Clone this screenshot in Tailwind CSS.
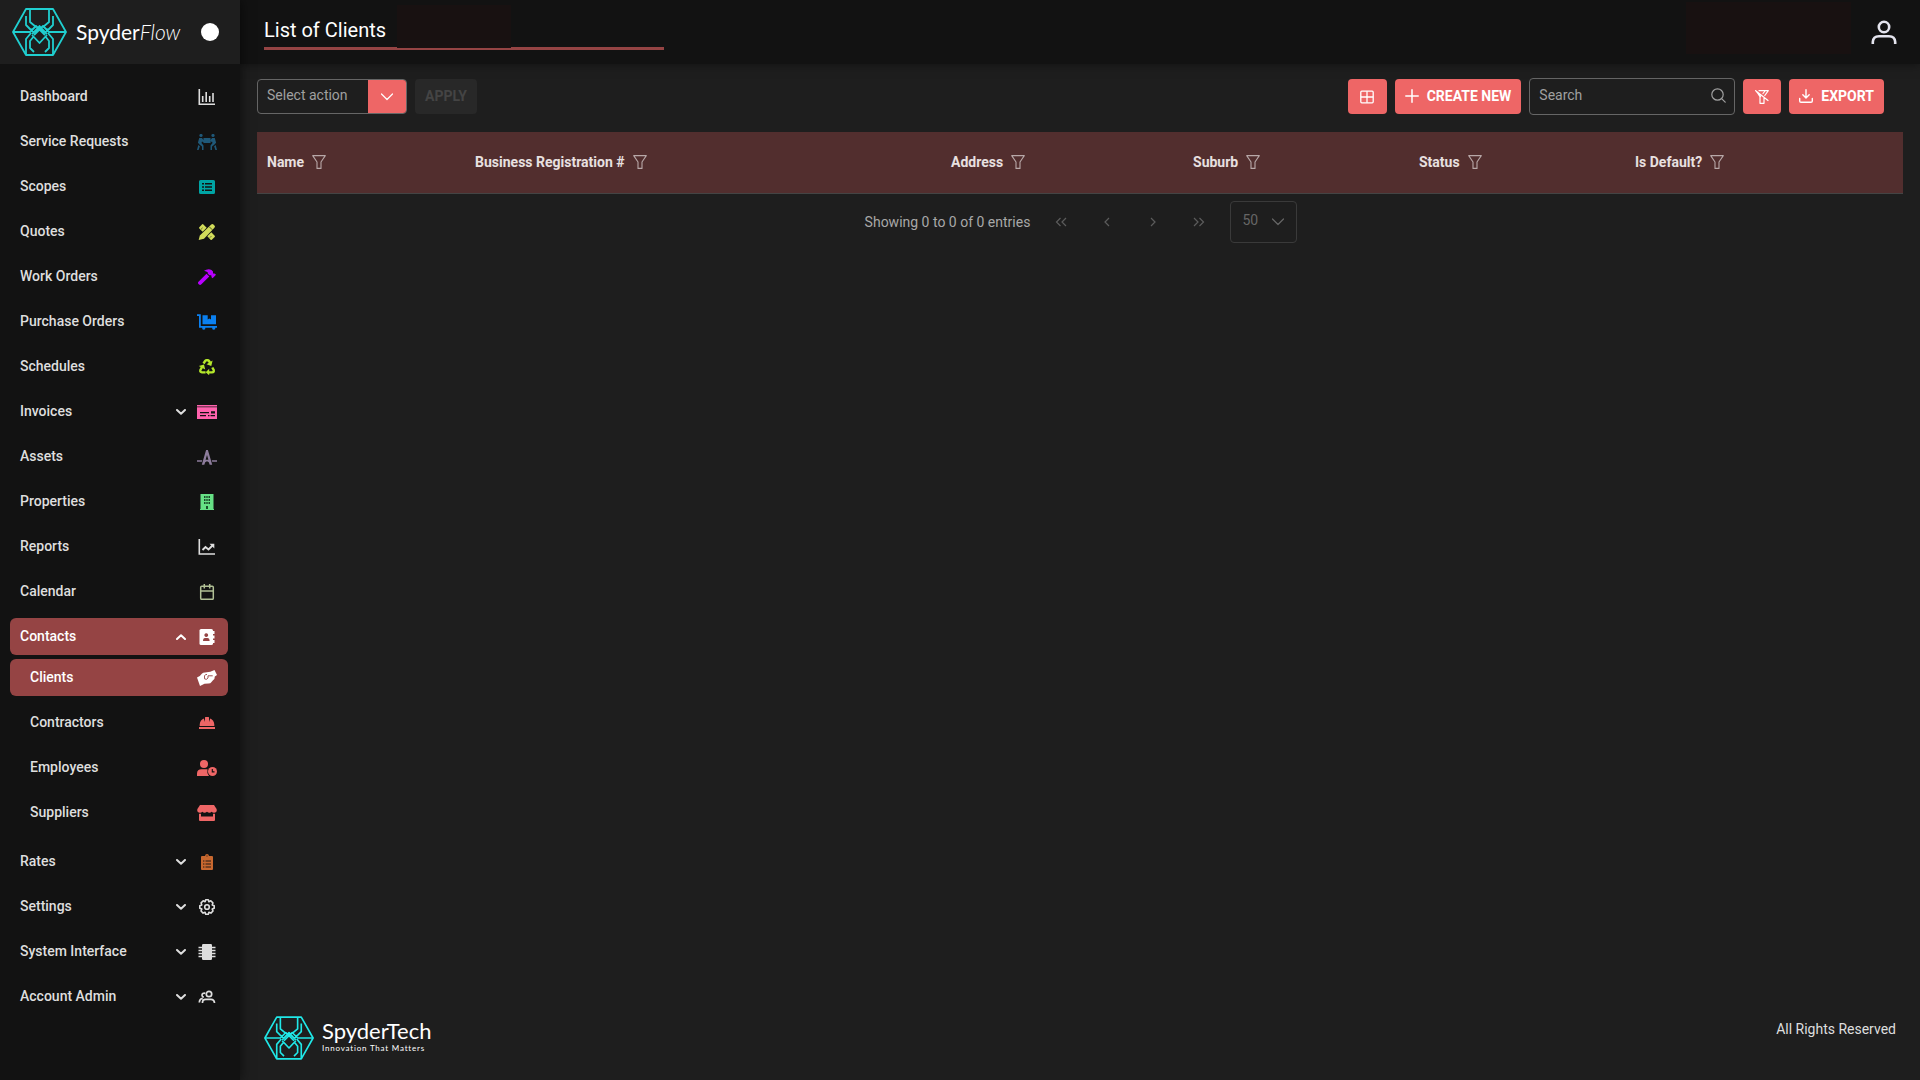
<!DOCTYPE html>
<html lang="en">
<head>
    <meta charset="UTF-8">
    <meta name="viewport" content="width=device-width, initial-scale=1.0">
    <title>SpyderFlow - List of Clients</title>
    <script src="https://cdn.jsdelivr.net/npm/@tailwindcss/browser@4"></script>
</head>
<body class="bg-[#1e1e1e] font-['Roboto',sans-serif] text-sm text-[#dedede]">
    <!-- Shared icons -->
    <svg class="hidden">
        <symbol id="spider" viewBox="0 0 55 48">
            <g fill="none" stroke="currentColor" stroke-width="1.800" stroke-linejoin="round">
                <path d="M1 24 14 1H41L54 24 41 47H14Z"/>
                <path d="M18 1V14L24 19M37 1V14L31 19M14 8V17L21 24M41 8V17L34 24"/>
                <path d="M1 24H18L24 18 33 27M54 24H37L31 18 22 27M19 21 22 24 27.500 18 33 24 36 21M20 26 27.500 19 35 26"/>
                <path d="M19 25 14 31V47M36 25 41 31V47M22 28 18 33V40L22 44M33 28 37 33V40L33 44M20 27 27.500 35 35 27"/>
            </g>
        </symbol>
        <symbol id="chev" viewBox="0 0 10 6">
            <path d="M1 1 5 4.700 9 1" fill="none" stroke="currentColor" stroke-width="2" stroke-linecap="round" stroke-linejoin="round"/>
        </symbol>
        <symbol id="thin-chev" viewBox="0 0 14 8">
            <path d="M1.500 1 7 6.500 12.500 1" fill="none" stroke="currentColor" stroke-width="1.200" stroke-linecap="round" stroke-linejoin="round"/>
        </symbol>
        <symbol id="funnel" viewBox="0 0 14 14">
            <path d="M.7.600H13.300L9 7V13.400H5V7Z" fill="none" stroke="currentColor" stroke-width="1.100" stroke-linejoin="round"/>
        </symbol>
    </svg>

    <div class="flex min-h-screen">
        <!-- Sidebar -->
        <aside class="relative z-20 w-60 shrink-0 bg-[#121212] shadow-[0_0_12px_rgba(0,0,0,0.6)]">
            <div class="flex h-16 items-center bg-[#1e1e1e] pl-3 pr-[21px]">
                <svg class="h-12 w-[55px] text-[#20cfd0]"><use href="#spider"/></svg>
                <span class="ml-[9px] font-['Lato',sans-serif] text-[21px] text-white">Spyder<i class="font-light">Flow</i></span>
                <button type="button" aria-label="Pin menu" class="ml-auto size-[18px] rounded-full bg-white"></button>
            </div>
            <nav class="flex flex-col gap-2 pt-[14px] pl-[10px] pr-3 font-medium">
                <a href="#" class="flex h-[37px] items-center justify-between pl-[10px] pr-[11px]"><span class="pb-[2px]">Dashboard</span>
                    <svg class="h-4 w-5" viewBox="0 0 20 16" fill="none" stroke="currentColor" stroke-width="1.600"><path d="M2.300 0V15.200H18M5.700 13V7M9.200 13V3M12.700 13V7M16 13V4"/></svg>
                </a>
                <a href="#" class="flex h-[37px] items-center justify-between pl-[10px] pr-[11px]"><span class="pb-[2px]">Service Requests</span>
                    <svg class="h-4 w-5 text-[#1f5878]" viewBox="0 0 20 16" fill="currentColor"><circle cx="4" cy="1.500" r="1.600"/><circle cx="16" cy="1.500" r="1.600"/><path d="M6.500 4H13.500V9H6.500ZM2.200 4H5L6.800 6.500V8.500L5 7.500 4.500 9 6.500 11.500V16H5V12.500L2.500 10.500.9 8.800ZM17.800 4H15L13.200 6.500V8.500L15 7.500 15.500 9 13.500 11.500V16H15V12.500L17.500 10.500 19.100 8.800ZM1.300 11 2.900 12.300 1.600 16H0ZM18.700 11 17.100 12.300 18.400 16H20Z"/></svg>
                </a>
                <a href="#" class="flex h-[37px] items-center justify-between pl-[10px] pr-[11px]"><span class="pb-[2px]">Scopes</span>
                    <svg class="h-4 w-5 text-[#00a4a4]" viewBox="0 0 20 16" fill="currentColor" fill-rule="evenodd"><path d="M3.500 1H16.500A1.500 1.500 0 0 1 18 2.500V13.500A1.500 1.500 0 0 1 16.500 15H3.500A1.500 1.500 0 0 1 2 13.500V2.500A1.500 1.500 0 0 1 3.500 1ZM5 4V5.500H7V4ZM8 4V5.500H15V4ZM5 7.200V8.700H7V7.200ZM8 7.200V8.700H15V7.200ZM5 10.500V12H7V10.500ZM8 10.500V12H15V10.500Z"/></svg>
                </a>
                <a href="#" class="flex h-[37px] items-center justify-between pl-[10px] pr-[11px]"><span class="pb-[2px]">Quotes</span>
                    <svg class="h-4 w-5 text-[#d2dc5a]" viewBox="0 0 20 16" fill="currentColor"><path d="M2.300 3.200 5.200.3Q5.800-.2 6.400.4L9.700 3.700 5.700 7.700 2.300 4.400Q1.800 3.800 2.300 3.200ZM14.300 8.300 17.700 11.700Q18.200 12.300 17.700 12.900L14.800 15.700Q14.200 16.200 13.600 15.700L10.300 12.300Z"/><path d="M14.200.600Q15.500-.4 16.700.7L17.400 1.400Q18.500 2.500 17.400 3.800L7 14.800 1.700 16 2.800 11.500Z"/><path d="M4.200 5.200 5.500 3.900M13 13.500 14.200 12.300M12.300 2.800 15.300 5.800" stroke="#121212" stroke-width=".7"/></svg>
                </a>
                <a href="#" class="flex h-[37px] items-center justify-between pl-[10px] pr-[11px]"><span class="pb-[2px]">Work Orders</span>
                    <svg class="h-4 w-5 text-[#b800ff]" viewBox="0 0 20 16" fill="currentColor"><path d="M7 1.800Q11-1 14.500.9L16 2.400V4.100L16.700 4.800 17.700 4.500 19 5.800 15.600 9.300 14.300 8 14.600 7 14 6.300H12.400L10.700 4.600V3.300Q9.400 2.400 7 1.800Z"/><path d="M9.500 4.800 12.300 7.600 4.400 15.200Q3.200 16.500 2 15.500L1.500 15Q.5 13.900 1.500 12.800Z"/></svg>
                </a>
                <a href="#" class="flex h-[37px] items-center justify-between pl-[10px] pr-[11px]"><span class="pb-[2px]">Purchase Orders</span>
                    <svg class="h-4 w-5 text-[#0b80f0]" viewBox="0 0 20 16" fill="currentColor"><path d="M0 .3H3.800V12H20V13.800H18.300A1.600 1.600 0 1 1 15.200 13.800H8.300A1.600 1.600 0 1 1 5.200 13.800H2V2H0ZM5.500 1.300H10.700V5.500L12.300 4.500 14 5.500V1.300H19V10.300H5.500Z"/></svg>
                </a>
                <a href="#" class="flex h-[37px] items-center justify-between pl-[10px] pr-[11px]"><span class="pb-[2px]">Schedules</span>
                    <svg class="h-4 w-5 text-[#b5e82b]" viewBox="0 0 20 16"><g fill="none" stroke="currentColor" stroke-width="2.400"><path d="M6.500 4.500 8.300 1.800Q8.800 1.200 9.500 1.200H10.700Q11.500 1.200 12 2L13.300 4"/><path d="M15.300 8.500 16.700 11Q17.300 13.400 15 13.400H11.500"/><path d="M8.600 13.400H5Q2.700 13.200 3.400 11L5 8.200"/></g><path d="M15.600 1.500 14.300 7 9.500 5.300ZM12.200 9.700V16.300L8.700 13.200ZM1.800 7.100 7 5.600 8.200 10.500Z" fill="currentColor"/></svg>
                </a>
                <a href="#" class="flex h-[37px] items-center pl-[10px] pr-[11px]"><span class="pb-[2px]">Invoices</span>
                    <svg class="ml-auto mr-[11px] h-[6px] w-[10px]"><use href="#chev"/></svg>
                    <svg class="h-4 w-5 text-[#ff62ad]" viewBox="0 0 20 16" fill="currentColor" fill-rule="evenodd"><path d="M0 1H20V2.500H0ZM0 3.200H20V15H0ZM3 8V9.200H12V8ZM3 11V12.200H9V11ZM11 11V12.200H12.500V11ZM13.500 11V12.200H18V11ZM14 7.300V9.500H18V7.300Z"/></svg>
                </a>
                <a href="#" class="flex h-[37px] items-center justify-between pl-[10px] pr-[11px]"><span class="pb-[2px]">Assets</span>
                    <svg class="h-4 w-5 text-[#8d7c9c]" viewBox="0 0 20 16" fill="currentColor"><path d="M9.100 1H10.900L15.200 15.800H12.700L11.800 13.200 10 12.200 8.200 13.200 7.300 15.800H4.800ZM10 6 8.600 10.800H11.400Z" fill-rule="evenodd"/><path d="M0 11.300H5.300L4.800 12.700H0ZM14.700 11.300H20V12.700H15.200Z"/></svg>
                </a>
                <a href="#" class="flex h-[37px] items-center justify-between pl-[10px] pr-[11px]"><span class="pb-[2px]">Properties</span>
                    <svg class="h-4 w-5 text-[#66e085]" viewBox="0 0 20 16"><path d="M3.500 0H16.500V15H17V16H3V15H3.500Z" fill="currentColor"/><path d="M7 2H8.500V4H7ZM9.300 2H10.700V4H9.300ZM11.500 2H13V4H11.500ZM7 5H8.500V7H7ZM9.300 5H10.700V7H9.300ZM11.500 5H13V7H11.500ZM7 8H8.500V10H7ZM9.300 8H10.700V10H9.300ZM11.500 8H13V10H11.500ZM9 12H11V15H9Z" fill="#1a4a28"/></svg>
                </a>
                <a href="#" class="flex h-[37px] items-center justify-between pl-[10px] pr-[11px]"><span class="pb-[2px]">Reports</span>
                    <svg class="h-4 w-5" viewBox="0 0 20 16" fill="none" stroke="currentColor" stroke-width="1.600"><path d="M2.300 0V15H18"/><path d="M5.500 11 8.500 8 11.500 10.500 16 6" stroke-width="1.900"/><path d="M12.500 4.800H17.300V9.500Z" fill="currentColor" stroke="none"/></svg>
                </a>
                <a href="#" class="flex h-[37px] items-center justify-between pl-[10px] pr-[11px]"><span class="pb-[2px]">Calendar</span>
                    <svg class="h-4 w-5 text-[#b1c095]" viewBox="0 0 20 16" fill="none" stroke="currentColor" stroke-width="1.500"><rect x="3.700" y="2.200" width="12.600" height="13.100" rx="1"/><path d="M3.700 7H16.300M7.300 0V4.500M12.700 0V4.500"/></svg>
                </a>

                <!-- Contacts group -->
                <div class="flex flex-col gap-1">
                    <a href="#" class="flex h-[37px] items-center rounded-md bg-[#954444] pl-[10px] pr-[11px] text-white"><span class="pb-[2px]">Contacts</span>
                        <svg class="ml-auto mr-[11px] h-[6px] w-[10px] rotate-180"><use href="#chev"/></svg>
                        <svg class="h-4 w-5" viewBox="0 0 20 16" fill="currentColor"><rect x="2.500" width="13.500" height="16" rx="1.600"/><path d="M16 2H17.500V5H16ZM16 6.500H17.500V9.500H16ZM16 11H17.500V14H16Z"/><path d="M9.300 4.200A1.900 1.900 0 1 1 9.200 4.200ZM6 11.900Q6 9 8 9H10.500Q12.600 9 12.600 11.900Z" fill="#954444"/></svg>
                    </a>
                    <div class="flex flex-col gap-2">
                        <a href="#" class="flex h-[37px] items-center justify-between rounded-md bg-[#954444] pl-5 pr-[11px] text-white"><span class="pb-[2px]">Clients</span>
                            <svg class="h-4 w-5" viewBox="0 0 20 16" fill="currentColor"><path d="M0 7.500 2.800 6 4.800 3.800Q6 2.400 8 2.400L13.300 1.800 17.500 0 20 5 17.800 6.500Q18 9 16 10.300L14.500 12Q13.500 13.500 11.500 13.600L7.500 13.800 3 16Z"/><path d="M15.700 5.800H11V8Q9.500 10.300 7.500 8.800V5.800Q8 4.400 10 4.400" fill="none" stroke="#954444" stroke-width=".9"/></svg>
                        </a>
                        <a href="#" class="flex h-[37px] items-center justify-between pl-5 pr-[11px]"><span class="pb-[2px]">Contractors</span>
                            <svg class="h-4 w-5 text-[#ee6666]" viewBox="0 0 20 16" fill="currentColor"><path d="M2 12H18V14H2ZM2.700 11V9.500Q3 5.200 6.800 3.500L8 7V2.500Q8 2 8.500 2H11.500Q12 2 12 2.500V7L13.200 3.500Q17 5.200 17.300 9.500V11Z"/></svg>
                        </a>
                        <a href="#" class="flex h-[37px] items-center justify-between pl-5 pr-[11px]"><span class="pb-[2px]">Employees</span>
                            <svg class="h-4 w-5 text-[#ee6666]" viewBox="0 0 20 16" fill="currentColor"><circle cx="7" cy="4" r="4"/><path d="M0 16V13.500Q.2 9.300 4.500 9.300H10.500Q9.500 12.700 12 16Z"/><circle cx="15.500" cy="11.500" r="4.500"/><path d="M15.300 9V11.900H17.500" fill="none" stroke="#121212" stroke-width="1.100"/></svg>
                        </a>
                        <a href="#" class="flex h-[37px] items-center justify-between pl-5 pr-[11px]"><span class="pb-[2px]">Suppliers</span>
                            <svg class="h-4 w-5 text-[#ee6666]" viewBox="0 0 20 16" fill="currentColor"><path d="M3 0H17L19.600 4Q20.500 7.500 17 7.700 15.500 7.700 14.700 6.800 12.500 8.500 10 6.800 7.500 8.500 5.300 6.800 4.500 7.700 3 7.700-.5 7.500.4 4ZM2 8.700H4V11.500H16V8.700H18V15Q18 16 17 16H3Q2 16 2 15Z"/></svg>
                        </a>
                    </div>
                </div>

                <a href="#" class="mt-1 flex h-[37px] items-center pl-[10px] pr-[11px]"><span class="pb-[2px]">Rates</span>
                    <svg class="ml-auto mr-[11px] h-[6px] w-[10px]"><use href="#chev"/></svg>
                    <svg class="h-4 w-5 text-[#c8682f]" viewBox="0 0 20 16" fill="currentColor"><path d="M5 2H8Q8.200 0 10 0T12 2H15Q16 2 16 3V15Q16 16 15 16H5Q4 16 4 15V3Q4 2 5 2Z"/><path d="M6 7H7.400M8.500 7H14M6 10H7.400M8.500 10H14M6 13H7.400M8.500 13H14M9.500 2H10.500" stroke="#121212" stroke-width=".9"/></svg>
                </a>
                <a href="#" class="flex h-[37px] items-center pl-[10px] pr-[11px]"><span class="pb-[2px]">Settings</span>
                    <svg class="ml-auto mr-[11px] h-[6px] w-[10px]"><use href="#chev"/></svg>
                    <svg class="h-4 w-5" viewBox="0 0 20 16" fill="none" stroke="currentColor" stroke-width="1.600" stroke-linejoin="round"><path d="M8.700.8H11.300L11.900 2.700 13.800 1.800 15.900 3.900 15.200 5.900 17.200 6.700V9.300L15.200 10.100 16 12 13.900 14.100 11.900 13.300 11.300 15.200H8.700L8.100 13.300 6.100 14.100 4 12 4.800 10.100 2.800 9.300V6.700L4.800 5.900 4.100 3.900 6.200 1.800 8.100 2.700Z"/><circle cx="10" cy="8" r="2.300"/></svg>
                </a>
                <a href="#" class="flex h-[37px] items-center pl-[10px] pr-[11px]"><span class="pb-[2px]">System Interface</span>
                    <svg class="ml-auto mr-[11px] h-[6px] w-[10px]"><use href="#chev"/></svg>
                    <svg class="h-4 w-5" viewBox="0 0 20 16"><rect x="5" width="10" height="16" rx="1.200" fill="currentColor"/><path d="M1.500 3.500H18.500M1.500 6.500H18.500M1.500 9.500H18.500M1.500 12.500H18.500" stroke="currentColor" stroke-width="1.300"/></svg>
                </a>
                <a href="#" class="flex h-[37px] items-center pl-[10px] pr-[11px]"><span class="pb-[2px]">Account Admin</span>
                    <svg class="ml-auto mr-[11px] h-[6px] w-[10px]"><use href="#chev"/></svg>
                    <svg class="h-4 w-5" viewBox="0 0 20 16" fill="none" stroke="currentColor" stroke-width="1.700"><circle cx="12" cy="5" r="2.700"/><path d="M5.500 14V13Q5.800 10.300 8.500 10.300H14Q17.300 10.500 17.500 14M8.300 4.300Q5 3.800 5 6.300 5 7.800 6.800 8.200M5.700 9.300Q2.500 9.800 2.300 13.500"/></svg>
                </a>
            </nav>
        </aside>

        <div class="flex min-w-0 flex-1 flex-col">
            <!-- Top bar -->
            <header class="relative z-10 flex h-16 items-start justify-between bg-[#121212] pl-6 pr-[23px] shadow-[0_0_10px_rgba(0,0,0,0.5)]">
                <div class="relative flex h-[50px] w-[400px] items-center border-b-[3px] border-[#954444] pt-3">
                    <h1 class="text-xl text-white">List of Clients</h1>
                    <div class="absolute left-[133px] top-[5px] h-[43px] w-[114px] bg-[#181111]"></div>
                </div>
                <div class="flex items-start gap-5 pt-[2px]">
                    <div class="h-[52px] w-[165px] bg-[#181111]"></div>
                    <button type="button" aria-label="Account" class="mt-[18px]">
                        <svg class="h-6 w-[26px] text-[#e4e4ee]" viewBox="0 0 26 24" fill="none" stroke="currentColor" stroke-width="2.600"><circle cx="13" cy="7" r="5.200"/><path d="M1.800 24V22Q2.200 16.300 8 16.300H18Q23.800 16.300 24.200 22V24"/></svg>
                    </button>
                </div>
            </header>

            <main class="flex flex-1 flex-col pl-[17px] pr-[17px] pt-[14px]">
                <!-- Toolbar -->
                <div class="flex items-center gap-2 pr-[19px]">
                    <div class="relative flex h-[35px] w-[150px] overflow-hidden rounded border border-[#666]">
                        <select aria-label="Select action" class="w-full appearance-none pl-[9px] pb-[3px] text-[#a0a0a0]">
                            <option>Select action</option>
                        </select>
                        <span class="pointer-events-none absolute inset-y-0 right-0 flex w-[38px] items-center justify-center bg-[#ee6666] text-white">
                            <svg class="h-2 w-[14px]"><use href="#thin-chev"/></svg>
                        </span>
                    </div>
                    <button type="button" disabled class="h-[35px] rounded bg-[#282828] px-[10px] pb-px font-bold text-[#444]">APPLY</button>

                    <button type="button" aria-label="Columns" class="ml-auto flex h-[35px] w-[39px] items-center justify-center rounded bg-[#ee6666] text-white">
                        <svg class="size-[14px]" viewBox="0 0 14 14" fill="none" stroke="currentColor" stroke-width="1.300"><rect x=".8" y="1.200" width="12.400" height="11.600" rx="1"/><path d="M.8 7H13.200M7 1.200V12.800"/></svg>
                    </button>
                    <button type="button" class="flex h-[35px] items-center gap-2 rounded bg-[#ee6666] px-[10px] pb-px font-bold text-white">
                        <svg class="size-[14px]" viewBox="0 0 14 14" stroke="currentColor" stroke-width="1.500" stroke-linecap="round"><path d="M7 .8V13.200M.8 7H13.200"/></svg>
                        CREATE NEW
                    </button>
                    <div class="relative">
                        <input type="text" aria-label="Search" placeholder="Search" class="h-[37px] w-[206px] rounded border border-[#666] pl-[9px] pr-8 pb-1 placeholder:text-[#a0a0a0]">
                        <svg class="absolute right-[9px] top-[10px] size-[15px] text-[#a0a0a0]" viewBox="0 0 15 15" fill="none" stroke="currentColor" stroke-width="1.200" stroke-linecap="round"><circle cx="6.500" cy="6.500" r="5.700"/><path d="M10.600 10.600 14.200 14.200"/></svg>
                    </div>
                    <button type="button" aria-label="Clear filters" class="flex h-[35px] w-[38px] items-center justify-center rounded bg-[#ee6666] text-white">
                        <svg class="size-[14px]" viewBox="0 0 14 14" fill="none" stroke="currentColor" stroke-width="1.200" stroke-linejoin="round" stroke-linecap="round"><path d="M4 .7H13.300L9.800 5.500M2.300 2.500 5 6.800V13.300H9V8.200M.7.700 13 10.500M.7.700 5.500 6.500M8 3.500 10 1"/></svg>
                    </button>
                    <button type="button" class="flex h-[35px] items-center gap-2 rounded bg-[#ee6666] px-[10px] pb-px font-bold text-white">
                        <svg class="size-[14px]" viewBox="0 0 14 14" fill="none" stroke="currentColor" stroke-width="1.400" stroke-linecap="round" stroke-linejoin="round"><path d="M7 .7V8.800M3.800 5.800 7 9 10.200 5.800M.7 9.500V12Q.7 13.300 2 13.300H12Q13.300 13.300 13.300 12V9.500"/></svg>
                        EXPORT
                    </button>
                </div>

                <!-- Clients table -->
                <table class="mt-[17px] w-full table-fixed text-left">
                    <thead>
                        <tr class="h-[61px] border-b border-[#444] bg-[#522e2e] text-[#e8e0e0]">
                            <th class="w-[12.64%] px-[10px] font-bold"><span class="flex items-center gap-2">Name <svg class="size-[14px] text-[#b8a8a8]"><use href="#funnel"/></svg></span></th>
                            <th class="w-[28.92%] px-[10px] font-bold"><span class="flex items-center gap-2">Business Registration # <svg class="size-[14px] text-[#b8a8a8]"><use href="#funnel"/></svg></span></th>
                            <th class="w-[14.7%] px-[10px] font-bold"><span class="flex items-center gap-2">Address <svg class="size-[14px] text-[#b8a8a8]"><use href="#funnel"/></svg></span></th>
                            <th class="w-[13.73%] px-[10px] font-bold"><span class="flex items-center gap-2">Suburb <svg class="size-[14px] text-[#b8a8a8]"><use href="#funnel"/></svg></span></th>
                            <th class="w-[13.12%] px-[10px] font-bold"><span class="flex items-center gap-2">Status <svg class="size-[14px] text-[#b8a8a8]"><use href="#funnel"/></svg></span></th>
                            <th class="px-[10px] font-bold"><span class="flex items-center gap-2">Is Default? <svg class="size-[14px] text-[#b8a8a8]"><use href="#funnel"/></svg></span></th>
                        </tr>
                    </thead>
                </table>

                <!-- Paginator -->
                <div class="flex items-center justify-center pt-[7px] pl-[2px]">
                    <span class="mr-2 text-[#a8a8a8]">Showing 0 to 0 of 0 entries</span>
                    <button type="button" disabled aria-label="First page" class="flex h-[42px] w-[46px] items-center justify-center text-[#5c5c5c]">
                        <svg class="h-[10px] w-3" viewBox="0 0 12 10" fill="none" stroke="currentColor" stroke-width="1.200"><path d="M5.500 1 1.500 5 5.500 9M11 1 7 5 11 9"/></svg>
                    </button>
                    <button type="button" disabled aria-label="Previous page" class="flex h-[42px] w-[46px] items-center justify-center text-[#5c5c5c]">
                        <svg class="h-[10px] w-[6px]" viewBox="0 0 6 10" fill="none" stroke="currentColor" stroke-width="1.200"><path d="M5 1 1 5 5 9"/></svg>
                    </button>
                    <button type="button" disabled aria-label="Next page" class="flex h-[42px] w-[46px] items-center justify-center text-[#5c5c5c]">
                        <svg class="h-[10px] w-[6px]" viewBox="0 0 6 10" fill="none" stroke="currentColor" stroke-width="1.200"><path d="M1 1 5 5 1 9"/></svg>
                    </button>
                    <button type="button" disabled aria-label="Last page" class="flex h-[42px] w-[46px] items-center justify-center text-[#5c5c5c]">
                        <svg class="h-[10px] w-3" viewBox="0 0 12 10" fill="none" stroke="currentColor" stroke-width="1.200"><path d="M1 1 5 5 1 9M6.500 1 10.500 5 6.500 9"/></svg>
                    </button>
                    <div class="relative ml-2 text-[#666]">
                        <select disabled aria-label="Rows per page" class="h-[42px] w-[67px] appearance-none rounded border border-[#3a3a3a] pl-[11px] pb-1">
                            <option>50</option>
                        </select>
                        <svg class="pointer-events-none absolute right-3 top-[17px] h-2 w-[14px]"><use href="#thin-chev"/></svg>
                    </div>
                </div>

                <!-- Footer -->
                <footer class="mt-auto flex items-start justify-between pb-5 pl-[7px] pr-[7px]">
                    <div class="flex items-center gap-2">
                        <svg class="h-11 w-[50px] text-[#20e8e8]"><use href="#spider"/></svg>
                        <div class="font-['Lato',sans-serif] text-white">
                            <p class="text-[22px] leading-6">SpyderTech</p>
                            <p class="pb-1 text-[8px] leading-[10px] tracking-widest">Innovation That Matters</p>
                        </div>
                    </div>
                    <p class="pt-[3px]">All Rights Reserved</p>
                </footer>
            </main>
        </div>
    </div>
</body>
</html>
